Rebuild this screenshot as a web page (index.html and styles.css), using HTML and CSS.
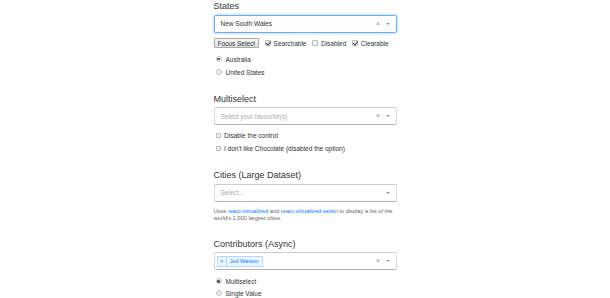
FILE: index.html
```html
<!DOCTYPE html>
<html lang="en">
<head>
    <meta charset="UTF-8">
    <title>React Select</title>
    <link rel="stylesheet" href="styles.css">
</head>
<body>

    <div class="page">

        <!-- States -->
        <div class="section">
            <h3 class="section-heading">States</h3>
            <div class="select is-focused">
                <div class="select-value">New South Wales</div>
                <span class="select-clear">×</span>
                <span class="select-arrow"></span>
            </div>
            <div class="controls">
                <button class="button">Focus Select</button>
                <label class="checkbox"><span class="box checked"></span>Searchable</label>
                <label class="checkbox"><span class="box"></span>Disabled</label>
                <label class="checkbox"><span class="box checked"></span>Clearable</label>
            </div>
            <div class="options">
                <label class="radio"><span class="dot checked"></span>Australia</label>
                <label class="radio"><span class="dot"></span>United States</label>
            </div>
        </div>

        <!-- Multiselect -->
        <div class="section">
            <h3 class="section-heading">Multiselect</h3>
            <div class="select">
                <div class="select-placeholder">Select your favourite(s)</div>
                <span class="select-clear">×</span>
                <span class="select-arrow"></span>
            </div>
            <div class="options options-wide">
                <label class="checkbox"><span class="box"></span>Disable the control</label>
                <label class="checkbox"><span class="box"></span>I don't like Chocolate (disabled the option)</label>
            </div>
        </div>

        <!-- Cities -->
        <div class="section section-hint">
            <h3 class="section-heading">Cities (Large Dataset)</h3>
            <div class="select">
                <div class="select-placeholder">Select...</div>
                <span class="select-arrow"></span>
            </div>
            <div class="hint">
                Uses <a href="#">react-virtualized</a> and <a href="#">react-virtualized-select</a> to display a list of the world's 1,000 largest cities.
            </div>
        </div>

        <!-- Contributors -->
        <div class="section">
            <h3 class="section-heading">Contributors (Async)</h3>
            <div class="select">
                <div class="select-tags">
                    <span class="tag"><span class="tag-remove">×</span><span class="tag-label">Jed Watson</span></span>
                </div>
                <span class="select-clear">×</span>
                <span class="select-arrow"></span>
            </div>
            <div class="options options-last">
                <label class="radio"><span class="dot checked"></span>Multiselect</label>
                <label class="radio"><span class="dot"></span>Single Value</label>
            </div>
        </div>

    </div>

</body>
</html>
```

FILE: styles.css
```css
/* General Styling */
* {
    margin: 0;
    padding: 0;
    box-sizing: border-box;
    font-family: "Liberation Sans", Arial, sans-serif;
}

body {
    background-color: #fff;
    color: #333;
    font-size: 6.5px;
}

.page {
    width: 183px;
    margin: 0 auto;
}

/* Sections */
.section {
    margin-bottom: 14px;
}

.section-hint {
    margin-bottom: 16px;
}

.section-heading {
    font-size: 9px;
    font-weight: normal;
    line-height: 12px;
    color: #333;
    margin-bottom: 2.5px;
}

/* Select */
.select {
    height: 18px;
    border: 1px solid #d9d9d9;
    border-top-color: #ccc;
    border-bottom-color: #b3b3b3;
    border-radius: 2px;
    display: flex;
    align-items: center;
    padding: 0 6px 0 6px;
    background: #fff;
}

.select.is-focused {
    border-color: #66afff;
    box-shadow: 0 0 0 1.5px rgba(0, 126, 255, 0.15);
}

.select-value,
.select-placeholder,
.select-tags {
    flex: 1;
    font-size: 6.5px;
}

.select-placeholder {
    color: #aaa;
}

.select-clear {
    color: #999;
    font-size: 8px;
    line-height: 1;
    margin-right: 5px;
}

.select-arrow {
    width: 0;
    height: 0;
    border-left: 2.5px solid transparent;
    border-right: 2.5px solid transparent;
    border-top: 2.5px solid #999;
}

/* Multi value tag */
.select-tags {
    display: flex;
    margin-left: -4px;
}

.tag {
    display: flex;
    align-items: center;
    height: 11px;
    background-color: rgba(0, 126, 255, 0.08);
    border: 1px solid rgba(0, 126, 255, 0.24);
    border-radius: 1px;
    color: #007eff;
    font-size: 5.5px;
}

.tag-remove {
    padding: 0 2.5px;
    border-right: 1px solid rgba(0, 126, 255, 0.24);
    line-height: 9px;
}

.tag-label {
    padding: 0 3px;
}

/* Controls */
.controls {
    display: flex;
    align-items: center;
    margin-top: 4px;
}

.button {
    height: 10px;
    padding: 0 3px;
    font-size: 6.5px;
    color: #333;
    background: linear-gradient(#f6f6f6, #e2e2e2);
    border: 1px solid #aaa;
    border-radius: 1px;
    margin-right: 6px;
}

.controls .checkbox {
    margin-right: 6px;
}

.options {
    margin-top: 3px;
    display: flex;
    flex-direction: column;
}

.options-wide {
    margin-top: 4px;
}

.options-last {
    margin-top: 5px;
}

.options-last .radio {
    height: 12px;
}

.checkbox,
.radio {
    display: flex;
    align-items: center;
    height: 13px;
    color: #333;
    font-size: 6.5px;
}

.options .checkbox,
.options .radio {
    padding-left: 2px;
}

.box {
    width: 5.5px;
    height: 5.5px;
    border: 1px solid #bbb;
    border-radius: 1px;
    background: #f3f3f3;
    margin-right: 3px;
    position: relative;
}

.box.checked::after {
    content: "";
    position: absolute;
    left: 1px;
    top: -1.5px;
    width: 1.5px;
    height: 4px;
    border-right: 1px solid #444;
    border-bottom: 1px solid #444;
    transform: rotate(40deg);
}

.dot {
    width: 6px;
    height: 6px;
    border: 1px solid #c4c4c4;
    border-radius: 50%;
    background: #f0f0f0;
    margin-right: 4px;
    display: flex;
    align-items: center;
    justify-content: center;
}

.dot.checked::after {
    content: "";
    width: 2.5px;
    height: 2.5px;
    border-radius: 50%;
    background: #555;
}

/* Hint */
.hint {
    margin-top: 6px;
    font-size: 5.7px;
    line-height: 7.2px;
    color: #666;
}

.hint a {
    color: #007eff;
    text-decoration: none;
}
```
